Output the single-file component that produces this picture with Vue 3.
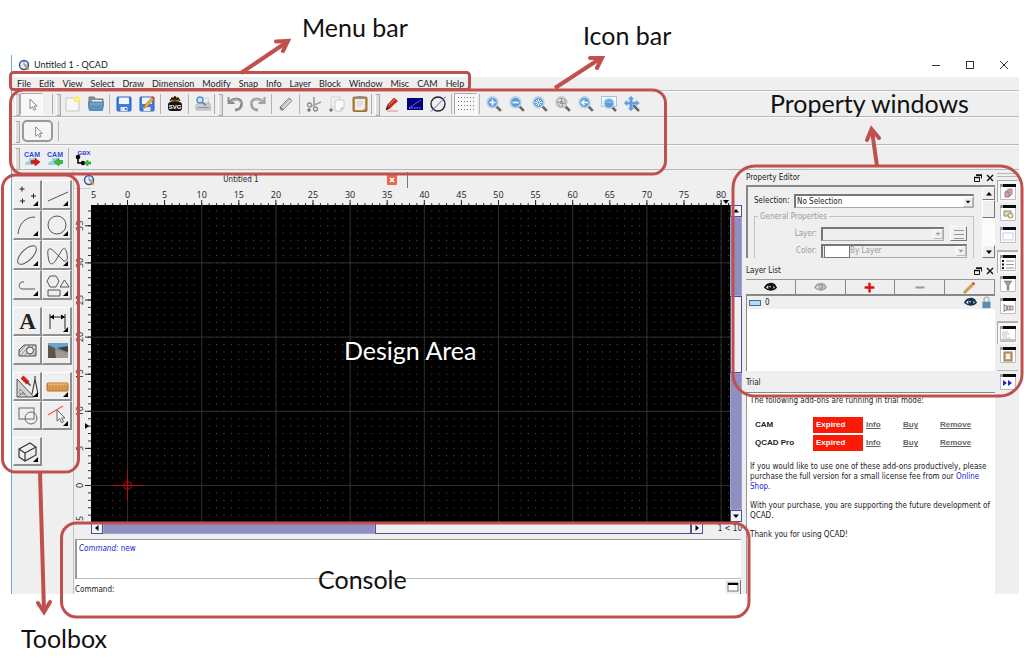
<script setup>
import { ref } from 'vue'

const menus = ['File', 'Edit', 'View', 'Select', 'Draw', 'Dimension', 'Modify', 'Snap', 'Info', 'Layer', 'Block', 'Window', 'Misc', 'CAM', 'Help']

const cursor = '<path d="M6 3v10l2.400-2.200 1.700 3.400 1.600-.8-1.600-3.300h3z" fill="#fff" stroke="#858585" stroke-width="1"/>'
const lens = (inner, tone = '#5b9be0', rim = '#b9cfe4') =>
  `<path d="M10 10l4.800 4.800" stroke="#686868" stroke-width="2.600"/><circle cx="6.500" cy="6.300" r="5.300" fill="${tone}" stroke="${rim}" stroke-width="1.800"/>${inner}`
const cam = (arrow) =>
  `<path d="M1 15q0-4 4-4V8h6v3q3 0 3 4z" fill="#9bd3e2"/><text x="8" y="7" text-anchor="middle" font-size="7" font-family="Liberation Sans, sans-serif" font-weight="700" fill="#2a4ae0">CAM</text>${arrow}`

const icons = {
  select: cursor,
  new: '<path d="M1 2h10l3 3v10H1z" fill="#f7f7f7" stroke="#c6c6c6"/><circle cx="12" cy="3.500" r="3" fill="#f3ec3c" stroke="#f8f4a0"/><circle cx="12" cy="3.500" r="1" fill="#fff"/>',
  open: '<path d="M1 13V1h5l1 2h8v3" fill="#8b8f92" stroke="#777"/><path d="M4 4h10v4H4z" fill="#e8eef2"/><path d="M0 6h16l-1.500 8.500h-13z" fill="#5d93bd" stroke="#4b7da6" stroke-width=".8"/><path d="M2 8h12" stroke="#8ab5d6"/>',
  save: '<rect x="1" y="1" width="14" height="14" rx="1" fill="#3f7be0" stroke="#2d60be"/><path d="M3 1.500h10V8H3z" fill="#f2f5fb"/><path d="M4.500 11h7v4h-7z" fill="#dfe6f2"/><path d="M9 12h1.500v2H9z" fill="#3a62a8"/>',
  saveas: '<rect x="1" y="1" width="14" height="14" rx="1" fill="#3f7be0" stroke="#2d60be"/><path d="M3 1.500h10V8H3z" fill="#f2f5fb"/><path d="M4.500 11h7v4h-7z" fill="#dfe6f2"/><path d="M5 12l1-3 7.500-8.500 2 2L8 11z" fill="#f2a93a" stroke="#b86f16" stroke-width=".7"/><path d="M13 1l2 2" stroke="#d94b4b" stroke-width="2"/>',
  svg: '<circle cx="8" cy="4.500" r="4" fill="#f0a42c"/><path d="M3 5l2-3 1 2 2-3.500L10 4l1-2 2 3M4 6h8M8 2v5" fill="none" stroke="#111" stroke-width="1.200"/><rect x="1" y="6" width="14" height="9" rx="3" fill="#17140d"/><text x="8" y="13" text-anchor="middle" font-family="Liberation Sans, sans-serif" font-size="6" font-weight="700" fill="#fff">SVG</text>',
  preview: '<path d="M8 2h5l1 6H7z" fill="#e9eef4" stroke="#b9bec5" stroke-width=".7"/><path d="M1 9l2-2h11l2 2v5H1z" fill="#c9ccd0" stroke="#a5a8ac" stroke-width=".7"/><path d="M3 11.500h11" stroke="#8e9195"/><circle cx="5" cy="4" r="3" fill="#cfe1f5" stroke="#5e8fc7" stroke-width="1.400"/><path d="M7 6l4 3.500" stroke="#5e7fa7" stroke-width="1.500"/>',
  undo: '<path d="M1.500 1v6h6" fill="none" stroke="#8b8b8b" stroke-width="2"/><path d="M2.500 6.500C6 1.500 14.500 2 14.500 8c0 4-3 6-6.500 6" fill="none" stroke="#8b8b8b" stroke-width="2.800"/><path d="M3.500 6C7 2 13.500 3 14 8" fill="none" stroke="#c4c4c4" stroke-width=".8"/>',
  redo: '<path d="M14.500 1v6h-6" fill="none" stroke="#a0a0a0" stroke-width="2"/><path d="M13.500 6.500C10 1.500 1.500 2 1.500 8c0 4 3 6 6.500 6" fill="none" stroke="#a0a0a0" stroke-width="2.800"/><path d="M12.500 6C9 2 2.500 3 2 8" fill="none" stroke="#cfcfcf" stroke-width=".8"/>',
  eraser: '<path d="M2 11L11 2l3 2.500L5 14H3z" fill="#d9d9d9" stroke="#888" stroke-width="1"/><path d="M4 11l8-8" stroke="#a8a8a8"/><path d="M2 11l3 3" stroke="#777" stroke-width="1.400"/>',
  cut: '<path d="M8 1v9M15 6L6 10" stroke="#a5a5a5" stroke-width="1.800"/><circle cx="3.500" cy="9" r="2" fill="none" stroke="#8b8b8b" stroke-width="1.300"/><circle cx="9.500" cy="13" r="2" fill="none" stroke="#8b8b8b" stroke-width="1.300"/><path d="M3 12v4M1 14h4" stroke="#555"/>',
  copy: '<path d="M2 1h9v10H2z" fill="#f2f2f2" stroke="#d2d2d2"/><path d="M6 4h9v8l-3 3H6z" fill="#fafafa" stroke="#cccccc"/><path d="M15 12h-3v3" fill="none" stroke="#bbb"/><path d="M2 12v4M0 14h4" stroke="#555"/>',
  paste: '<rect x="1" y="1" width="14" height="14.500" rx="1" fill="#b98a45" stroke="#9a7136"/><path d="M3 3h10v9l-2 2H3z" fill="#eeeeec"/><rect x="5" y="0" width="6" height="3" rx="1" fill="#8b8f90"/><path d="M5 6h6M5 8h6M5 10h4" stroke="#c6c6c6" stroke-width=".8"/>',
  pencil: '<path d="M2 14l1.500-5L10 2l3.500 3L6 12z" fill="#d3261d" stroke="#8c1510" stroke-width=".6"/><path d="M2 14l1-3.500L5.500 12.500z" fill="#3a2c20"/><path d="M5 9l6-6" stroke="#f2857c"/><path d="M3 15h11" stroke="#e88" stroke-width="1"/>',
  lineweight: '<path d="M0 2h16v12H0z" fill="#00007c"/><path d="M2 12L14 4M2 12h12" stroke="#b9b9ff" stroke-width=".9" stroke-dasharray="1.500 1"/>',
  diameter: '<circle cx="8" cy="8" r="7" fill="none" stroke="#1f1f1f" stroke-width="1.300"/><path d="M1 15.500L16 .5" stroke="#5c5cf2" stroke-width="1"/>',
  grid: '<g fill="#777">' + [1, 5, 9, 13].map(y => [0, 3, 6, 9, 12, 15].map(x => `<rect x="${x}" y="${y}" width="1" height="1"/>`).join('')).join('') + '</g>',
  zoomIn: lens('<path d="M6.500 3.500v6M3.500 6.500h6" stroke="#fff" stroke-width="1.600"/>'),
  zoomOut: lens('<path d="M3.500 6.500h6" stroke="#fff" stroke-width="1.600"/>'),
  zoomAuto: lens('<path d="M4 4l5 5M9 4l-5 5M6.500 3v7M3 6.500h7" stroke="#fff" stroke-width="1"/><circle cx="6.500" cy="6.500" r="1.200" fill="#5b9be0"/>'),
  zoomSel: lens('<path d="M4 4h5v5H4z" fill="none" stroke="#eee" stroke-width="1.300" stroke-dasharray="2 1"/>', '#9a9a9a', '#cacaca'),
  zoomPrev: lens('<path d="M10 6.500H4M6.500 4L3.800 6.500 6.500 9" stroke="#fff" fill="none" stroke-width="1.500"/>'),
  zoomWin: '<path d="M.5.500h15v10H.5z" fill="#f5f8fc" stroke="#9fc2ea"/><path d="M11 11l4 4" stroke="#686868" stroke-width="2.500"/><circle cx="8" cy="7.500" r="4.800" fill="#5b9be0" stroke="#b9cfe4" stroke-width="1.500"/><path d="M5 6h6" stroke="#a9ccf2"/>',
  pan: '<path d="M9 9l6 6" stroke="#686868" stroke-width="2.500"/><path d="M7 0l3 3H8.500v3H12V4l3.500 3L12 10V8.500H8.500V12H10l-3 3-3-3h1.500V8.500H3V10L0 7l3-3v2h2.500V3H4z" fill="#5f9fe2" stroke="#9bbfe4" stroke-width=".6"/>',
  camOut: cam('<path d="M7 10.500h4V8l5 4-5 4v-2.500H7z" fill="#e01414" stroke="#9a1010" stroke-width=".5"/>'),
  camIn: cam('<path d="M16 10.500h-4V8l-5 4 5 4v-2.500h4z" fill="#35c33a" stroke="#197a1d" stroke-width=".5"/>'),
  gbx: '<text x="9" y="5" text-anchor="middle" font-size="6" font-family="Liberation Sans, sans-serif" font-weight="700" fill="#3434d8">GBX</text><circle cx="3" cy="7" r="2.300" fill="#050505"/><path d="M3 7v6h6" fill="none" stroke="#050505" stroke-width="1.600"/><circle cx="8" cy="13" r="2.200" fill="#050505"/><path d="M16 12h-3v-2l-4 3 4 3v-2h3z" fill="#35c33a" stroke="#197a1d" stroke-width=".5"/>'
}

const mainBar = [
  { t: 'handle' }, { t: 'on', i: 'select', l: 'Select' }, { t: 'wide' },
  { i: 'new', l: 'New' }, { i: 'open', l: 'Open' }, { t: 'sep' },
  { i: 'save', l: 'Save' }, { i: 'saveas', l: 'Save as' }, { t: 'sep' },
  { i: 'svg', l: 'Export SVG' }, { t: 'sep' }, { i: 'preview', l: 'Print preview' }, { t: 'group' },
  { i: 'undo', l: 'Undo' }, { i: 'redo', l: 'Redo' }, { t: 'sep' }, { i: 'eraser', l: 'Delete' }, { t: 'sep' },
  { i: 'cut', l: 'Cut' }, { i: 'copy', l: 'Copy' }, { i: 'paste', l: 'Paste' }, { t: 'group' },
  { i: 'pencil', l: 'Pen' }, { i: 'lineweight', l: 'Screen based linetypes' }, { i: 'diameter', l: 'Draft mode' }, { t: 'sep' },
  { t: 'on', i: 'grid', l: 'Grid' }, { t: 'sep' },
  { i: 'zoomIn', l: 'Zoom in' }, { i: 'zoomOut', l: 'Zoom out' }, { i: 'zoomAuto', l: 'Auto zoom' }, { i: 'zoomSel', l: 'Zoom to selection' },
  { i: 'zoomPrev', l: 'Previous view' }, { i: 'zoomWin', l: 'Window zoom' }, { i: 'pan', l: 'Pan' }
]

const thin = (d) => `<path d="${d}" fill="none" stroke="#555" stroke-width="1"/>`
const more = '<path d="M25 20v5h-5z" fill="#000"/>'
const toolGroups = [
  [
    ['Point', '<path d="M6.500 8h5M9 5.500v5M18 15h5M20.500 12.500v5M7 20h5M9.500 17.500v5" stroke="#222" fill="none"/>' + more],
    ['Line', thin('M5 20L25 11') + more],
    ['Arc', thin('M5 23C6 13 12 6 22 6') + more],
    ['Circle', '<circle cx="14" cy="14" r="9" fill="none" stroke="#555"/>' + more],
    ['Ellipse', '<ellipse cx="14" cy="14" rx="12" ry="5.500" transform="rotate(-45 14 14)" fill="none" stroke="#555"/>' + more],
    ['Spline', thin('M6 20C3 7 6 6 10 9.500L21 20C24 21 25 17 24 13S22 5 19 9L13 19C10 24 7 24 6 20') + more],
    ['Polyline', thin('M11 11C5 10 5 18 9 18H22') + more],
    ['Shape', thin('M7 5h6l3 5-3 6H7L4 10zM17 16l4.500-7 4.500 7zM5 19h12v6H5z') + more]
  ],
  [
    ['Text', '<text x="14.500" y="22" text-anchor="middle" font-family="Liberation Serif, serif" font-weight="700" font-size="23" fill="#222">A</text>'],
    ['Dimension', '<path d="M7 22V7M22 22V7M7 10h15" fill="none" stroke="#222"/><path d="M7 10l4-2.500v5zM22 10l-4-2.500v5z" fill="#000"/>' + more],
    ['Hatch', '<path d="M6 20V14l5-5h12v11z" fill="#ddd" stroke="#444"/><path d="M6 17l6-7M7 20L17 9M11 20l10-11M16 20l7-8M20 20l3-4" stroke="#777" stroke-width=".8"/><circle cx="17" cy="14.500" r="3.500" fill="#efefef" stroke="#444"/>'],
    ['Image', '<rect x="5" y="7" width="20" height="15" fill="#7b8a93"/><path d="M5 7h20v5l-8 1-12-1z" fill="#6fa3cc"/><path d="M5 9l7 3 3 10H5z" fill="#5b5448"/><path d="M14 12l11-2v6z" fill="#3b4038"/><path d="M12 14l13 3v5H13z" fill="#a29b8d"/>']
  ],
  [
    ['Modify', '<path d="M4 7v18h17z" fill="#d2d2d2" stroke="#555"/><path d="M7 17v5h5z" fill="#efefef" stroke="#777" stroke-width=".8"/><path d="M5 25l5-5 4 5" stroke="#777" fill="none"/><path d="M9 5l6 6" stroke="#d32217" stroke-width="4"/><path d="M14 10l3.500 3.500" stroke="#444" stroke-width="1.600"/><path d="M22 4v4M22 7l-3 15M22 7l3 15" stroke="#333" fill="none" stroke-width="1.100"/>' + more],
    ['Measure', '<rect x="4" y="11" width="21" height="8" rx="1" fill="#dd9348" stroke="#b26f2d"/><path d="M5 12.500h19" stroke="#f4c083" stroke-width="2"/><path d="M7 12v2M10 12v2M13 12v2M16 12v2M19 12v2M22 12v2" stroke="#b57a40" stroke-width=".8"/>' + more],
    ['Boolean', '<rect x="6" y="7" width="15" height="11" fill="none" stroke="#666"/><circle cx="18" cy="17" r="6" fill="none" stroke="#666"/>'],
    ['Snap', '<path d="M5 14L20 5" stroke="#f25757" stroke-width="1.300"/><path d="M14 9v11l2.600-2.300 2 4 2-1-2-3.700h3.400z" fill="#f4f4f4" stroke="#666"/>' + more]
  ],
  [['Block', '<path d="M6 12l11-6 6 4v8l-11 6-6-4zM6 12l6 4v8M12 16l11-6" fill="none" stroke="#333" stroke-width="1.200"/>' + more]]
]

// Drawing scale: five units per step
const step = 37.1
const originX = 36.5
const originY = 280.5
const topMarks = Array.from({ length: 17 }, (_, k) => ({ v: k * 5, p: originX + k * step }))
const leftMarks = Array.from({ length: 8 }, (_, k) => ({ v: k * 5, p: originY - k * step }))
const minorTop = Array.from({ length: 86 }, (_, k) => originX + (k - 4) * step / 5)
const minorLeft = Array.from({ length: 42 }, (_, k) => originY - (k - 4) * step / 5)

const frame = '<path d="M0 0h16v16H0z" fill="#fff"/><path d="M.5 3v12.500h15V3" fill="none" stroke="#bdbdbd"/><path d="M0 0h16v3H0z" fill="#0b0b0b"/><path d="M0 0h3v3H0z" fill="#999"/>'
const dockIcons = [
  { n: 'Property Editor', on: true, d: '<path d="M5 8l4-3h3v5l-3 3H5z" fill="#e59a9a" stroke="#8a8a8a"/><path d="M5 8h4v5" fill="none" stroke="#8a8a8a"/>' },
  { n: 'Block List', d: '<path d="M4 6h7v5H4z" fill="#e8dc9a" stroke="#888"/><circle cx="10.500" cy="10.500" r="2.500" fill="#f2e8b4" stroke="#888"/>' },
  { n: 'View List', d: '<rect x="3" y="6" width="10" height="7" fill="#fafcff" stroke="#bcd2ec"/>', end: true },
  { n: 'Layer List', on: true, d: '<path d="M2 6h2M2 9.500h2M2 13h2" stroke="#111" stroke-width="2"/><path d="M6 6h8M6 9.500h8M6 13h8" stroke="#999"/>' },
  { n: 'Selection Filter', d: '<path d="M4 5h8L9 9v5H7V9z" fill="#999" stroke="#777" stroke-width=".6"/>' },
  { n: 'Part Library', d: '<path d="M4 6v8M4 7l3 1v4l-3 1M7 8h6v4H7z" fill="#ddd" stroke="#777" stroke-width=".8"/><path d="M10 8v4" stroke="#b55"/>', end: true },
  { n: 'Command Line', on: true, d: '<path d="M2 6h6M2 8h8M2 10h5M2 12h9" stroke="#c5c5c5"/><path d="M1 14h14" stroke="#888"/>' },
  { n: 'Clipboard', d: '<rect x="4" y="5" width="8" height="9" fill="#c9a676" stroke="#9a7a4c"/><path d="M6 7h4v5H6z" fill="#f2f2f2"/>', end: true },
  { n: 'More', d: '<path d="M3 6l4 3-4 3zM8 6l4 3-4 3z" fill="#2525cc"/>' }
]

const eye = (c) => `<path d="M1 8C4 3 12 3 15 8 12 12 5 12 1 8z" fill="none" stroke="${c}" stroke-width="1.800"/><circle cx="8.500" cy="8" r="3.300" fill="${c}"/><path d="M2 6C5 2 12 2 14 6" fill="none" stroke="${c}" stroke-width="1.400"/><circle cx="7.500" cy="7" r="1" fill="#efefef"/>`
const layerButtons = [
  ['Show all', eye('#111')],
  ['Hide all', eye('#a5a5a5')],
  ['Add layer', '<path d="M8 2v12M2 8h12" stroke="#d81313" stroke-width="3"/>'],
  ['Remove layer', '<path d="M3 8h11" stroke="#9c9c9c" stroke-width="2.600"/>'],
  ['Edit layer', '<path d="M1 15l1-3L12 2l2 2-10 10z" fill="#e3a33c" stroke="#936218" stroke-width=".6"/><path d="M12 2l2 2" stroke="#cf3c30" stroke-width="2.400"/>']
]
const addons = ['CAM', 'QCAD Pro']
const command = ref('')
</script>

<template>
  <div class="page">
    <div class="window">
      <header class="titlebar">
        <svg class="logo" viewBox="0 0 12 12"><circle cx="6" cy="6" r="4.500" fill="#e8edf5" stroke="#34518c" stroke-width="1.400" /><path d="M6 2v4h4" stroke="#7d93bf" fill="none" /><path d="M6 6l4 5 1-2z" fill="#e7a52e" stroke="#a86d14" stroke-width=".5" /></svg>
        <span class="title">Untitled 1 - QCAD</span>
        <button aria-label="Minimize"><svg viewBox="0 0 10 10"><path d="M1 5.500h8" stroke="#333" /></svg></button>
        <button aria-label="Maximize"><svg viewBox="0 0 10 10"><rect x="1.500" y="1.500" width="7" height="7" fill="none" stroke="#333" /></svg></button>
        <button aria-label="Close"><svg viewBox="0 0 10 10"><path d="M1 1l8 8M9 1l-8 8" stroke="#333" /></svg></button>
      </header>

      <nav class="menubar">
        <button v-for="m in menus" :key="m">{{ m }}</button>
      </nav>

      <div class="toolbar main-bar">
        <template v-for="(b, k) in mainBar" :key="k">
          <span v-if="!b.i" :class="b.t"></span>
          <button v-else :class="['slot', { on: b.t === 'on' }]" :aria-label="b.l"><svg viewBox="0 0 16 16" v-html="icons[b.i]"></svg></button>
        </template>
      </div>
      <div class="toolbar option-bar">
        <span class="handle"></span>
        <button class="option" aria-label="Reset"><svg viewBox="0 0 16 16" v-html="icons.select"></svg></button>
        <span class="sep"></span>
      </div>
      <div class="toolbar cam-bar">
        <span class="handle"></span>
        <button class="slot" aria-label="CAM export"><svg viewBox="0 0 16 16" v-html="icons.camOut"></svg></button>
        <button class="slot" aria-label="CAM import"><svg viewBox="0 0 16 16" v-html="icons.camIn"></svg></button>
        <span class="sep"></span>
        <button class="slot" aria-label="GBX import"><svg viewBox="0 0 16 16" v-html="icons.gbx"></svg></button>
      </div>

      <main class="work">
        <aside class="toolbox">
          <div v-for="(g, k) in toolGroups" :key="k" class="tools">
            <button v-for="t in g" :key="t[0]" :aria-label="t[0]"><svg viewBox="0 0 28 28" v-html="t[1]"></svg></button>
          </div>
        </aside>

        <section class="center">
          <div class="tabs">
            <div class="tab">
              <svg class="logo" viewBox="0 0 12 12"><circle cx="6" cy="6" r="4.500" fill="#e8edf5" stroke="#34518c" stroke-width="1.400" /><path d="M6 2v4h4" stroke="#7d93bf" fill="none" /><path d="M6 6l4 5 1-2z" fill="#e7a52e" stroke="#a86d14" stroke-width=".5" /></svg>
              <span>Untitled 1</span>
              <button class="tab-close" aria-label="Close tab"><svg viewBox="0 0 10 10"><path d="M3 3l4 4M7 3L3 7" stroke="#fff" stroke-width="1.600" /></svg></button>
            </div>
          </div>
          <div class="drawing">
            <span class="corner"></span>
            <svg class="ruler-top">
              <path v-for="(p, k) in minorTop" :key="'m' + k" :d="`M${p} 15v3`" stroke="#333" />
              <text x="0" y="10">5</text>
              <g v-for="m in topMarks" :key="m.v">
                <path :d="`M${m.p} 12v6`" stroke="#222" />
                <text :x="m.p" y="10" text-anchor="middle">{{ m.v }}</text>
              </g>
              <path d="M632 12h6l-3 4z" fill="#000" />
            </svg>
            <span></span>
            <svg class="ruler-left">
              <path v-for="(p, k) in minorLeft" :key="'m' + k" :d="`M14 ${p}h3`" stroke="#333" />
              <text transform="translate(9 316) rotate(-90)">5</text>
              <g v-for="m in leftMarks" :key="m.v">
                <path :d="`M11 ${m.p}h6`" stroke="#222" />
                <text text-anchor="middle" :transform="`translate(9 ${m.p}) rotate(-90)`">{{ m.v }}</text>
              </g>
              <path d="M11 218v6l4-3z" fill="#000" />
            </svg>
            <div class="canvas">
              <svg>
                <defs>
                  <pattern id="dots" :x="originX - 0.5" :y="originY - 0.5" :width="step / 5" :height="step / 5" patternUnits="userSpaceOnUse"><rect width="1" height="1" fill="#555" /></pattern>
                  <pattern id="lines" :x="originX - 0.5" :y="originY - 0.5" :width="step * 2" :height="step * 2" patternUnits="userSpaceOnUse"><path d="M.5 0v80M0 .5h80" stroke="#303030" /></pattern>
                </defs>
                <rect width="100%" height="100%" fill="#000" />
                <rect width="100%" height="100%" fill="url(#dots)" />
                <rect width="100%" height="100%" fill="url(#lines)" />
                <g fill="#b80e0e">
                  <rect :x="originX - 15" :y="originY - 0.5" width="30" height="1" />
                  <rect :x="originX - 0.5" :y="originY - 15" width="1" height="30" />
                </g>
                <circle :cx="originX" :cy="originY" r="4" fill="none" stroke="#b80e0e" />
              </svg>
            </div>
            <div class="scroll vertical">
              <button aria-label="Scroll up"><svg viewBox="0 0 10 10"><path d="M2 6.500h6L5 3z" /></svg></button>
              <span class="before"></span><span class="thumb"></span><span class="after"></span>
              <button aria-label="Scroll down"><svg viewBox="0 0 10 10"><path d="M2 3.500h6L5 7z" /></svg></button>
            </div>
            <span></span>
            <div class="scroll-row">
              <div class="scroll horizontal">
                <button aria-label="Scroll left"><svg viewBox="0 0 10 10"><path d="M6.500 2v6L3 5z" /></svg></button>
                <span class="before"></span><span class="thumb"></span>
                <button aria-label="Scroll right"><svg viewBox="0 0 10 10"><path d="M3.500 2v6L7 5z" /></svg></button>
              </div>
              <span class="scale">1 &lt; 10</span>
            </div>
          </div>
          <div class="console">
            <div class="history"><i>Command:</i> new</div>
            <div class="prompt">
              <label for="cmd">Command:</label>
              <input id="cmd" v-model="command" type="text">
              <button aria-label="Toggle history"><svg viewBox="0 0 12 10"><rect x="1" y="1" width="10" height="8" fill="#fff" stroke="#777" /><path d="M1 2h10" stroke="#000" stroke-width="2" /></svg></button>
            </div>
          </div>
        </section>

        <aside class="dock">
          <div class="dock-head">
            <h2>Property Editor</h2>
            <button aria-label="Float"><svg viewBox="0 0 8 8"><path d="M2.500 1.500h5v3M.5 3.500h5v4h-5z" fill="none" stroke="#111" /><path d="M2 1h6M0 3.500h6" stroke="#111" stroke-width="1.500" /></svg></button>
            <button aria-label="Close panel"><svg viewBox="0 0 8 8"><path d="M1 1l6 6M7 1L1 7" stroke="#111" stroke-width="1.400" /></svg></button>
          </div>
          <div class="editor">
            <div class="editor-body">
              <div class="field top">
                <label for="sel">Selection:</label>
                <span class="combo"><select id="sel"><option>No Selection</option></select><svg viewBox="0 0 10 10"><path d="M2 3.500h6L5 7z" /></svg></span>
              </div>
              <fieldset>
                <legend>General Properties</legend>
                <div class="field">
                  <label for="lay">Layer:</label>
                  <span class="combo dim"><select id="lay" disabled><option></option></select><svg viewBox="0 0 10 10"><path d="M2 3.500h6L5 7z" /></svg></span>
                  <button class="lines" aria-label="Layer options"><svg viewBox="0 0 12 12"><path d="M1 2.500h10M1 6.500h10M1 10.500h10" stroke="#999" /></svg></button>
                </div>
                <div class="field">
                  <label for="col">Color:</label>
                  <span class="combo dim swatch"><select id="col" disabled><option>By Layer</option></select><svg viewBox="0 0 10 10"><path d="M2 3.500h6L5 7z" /></svg></span>
                </div>
              </fieldset>
            </div>
            <div class="mini-scroll">
              <button aria-label="Up"><svg viewBox="0 0 10 10"><path d="M2 6.500h6L5 3z" /></svg></button>
              <span class="grip"></span>
              <button aria-label="Down"><svg viewBox="0 0 10 10"><path d="M2 3.500h6L5 7z" /></svg></button>
            </div>
          </div>

          <div class="dock-head list-head">
            <h2>Layer List</h2>
            <button aria-label="Float"><svg viewBox="0 0 8 8"><path d="M2.500 1.500h5v3M.5 3.500h5v4h-5z" fill="none" stroke="#111" /><path d="M2 1h6M0 3.500h6" stroke="#111" stroke-width="1.500" /></svg></button>
            <button aria-label="Close panel"><svg viewBox="0 0 8 8"><path d="M1 1l6 6M7 1L1 7" stroke="#111" stroke-width="1.400" /></svg></button>
          </div>
          <div class="layer-buttons">
            <button v-for="b in layerButtons" :key="b[0]" :aria-label="b[0]"><svg viewBox="0 0 16 16" v-html="b[1]"></svg></button>
          </div>
          <ul class="layers">
            <li>
              <span class="chip"></span><span class="name">0</span>
              <svg viewBox="0 0 16 16" v-html="eye('#12324c')"></svg>
              <svg viewBox="0 0 16 16"><path d="M5 8V5q0-3.500 3-3.500T11 5v3" fill="none" stroke="#9fb3c2" stroke-width="1.600" /><rect x="3" y="7" width="10" height="8" fill="#5f8db0" /></svg>
            </li>
          </ul>

          <div class="trial-head"><h2>Trial</h2></div>
          <div class="trial">
            <p>The following add-ons are running in trial mode:</p>
            <table>
              <tbody>
                <tr v-for="a in addons" :key="a">
                  <th scope="row">{{ a }}</th>
                  <td class="expired">Expired</td>
                  <td><a href="#info">Info</a></td>
                  <td><a href="#buy">Buy</a></td>
                  <td><a href="#remove">Remove</a></td>
                </tr>
              </tbody>
            </table>
            <p>If you would like to use one of these add-ons productively, please<br>purchase the full version for a small license fee from our <a class="shop" href="#shop">Online<br>Shop</a>.</p>
            <p>With your purchase, you are supporting the future development of<br>QCAD.</p>
            <p>Thank you for using QCAD!</p>
          </div>
        </aside>

        <aside class="strip">
          <span class="strip-grip"></span>
          <button v-for="d in dockIcons" :key="d.n" :class="{ on: d.on, end: d.end }" :aria-label="d.n"><svg viewBox="0 0 16 16" v-html="frame + d.d"></svg></button>
        </aside>
      </main>
    </div>

    <svg class="notes" viewBox="0 0 1024 661" aria-hidden="true">
      <g fill="none" stroke="#c0504d" stroke-width="3">
        <rect x="10.500" y="72.500" width="459" height="17" rx="3" />
        <rect x="10.500" y="90" width="655" height="84" rx="13" />
        <rect x="2.500" y="175" width="76" height="297" rx="13" />
        <rect x="733" y="166" width="289" height="230" rx="22" />
        <rect x="61.500" y="523" width="687.500" height="94" rx="15" />
        <path d="M241 73L287 42M555 88L601 58M877 166L872 131M40 472L44 611" stroke-width="4" />
        <path d="M276 41.500L288 41L283 51M590 58L602 58L597 68M867 140L871.500 129L879 138M38 603L44 612L50 602" stroke-width="4" stroke-linecap="round" />
      </g>
    </svg>
    <span class="note menu-note">Menu bar</span>
    <span class="note icon-note">Icon bar</span>
    <span class="note property-note">Property windows</span>
    <span class="note design-note">Design Area</span>
    <span class="note console-note">Console</span>
    <span class="note toolbox-note">Toolbox</span>
  </div>
</template>

<style>
body { margin: 0; background: #fff; }
</style>

<style scoped>
.page { position: relative; min-height: 661px; box-sizing: border-box; padding: 55px 5px 0 11px; overflow: hidden; font: 8px/10px "DejaVu Sans Condensed", "Open Sans", sans-serif; color: #222; }
.page * { box-sizing: border-box; }
button { font: inherit; color: inherit; padding: 0; margin: 0; border: 0; background: none; display: flex; align-items: center; justify-content: center; flex: none; }
svg { display: block; flex: none; }
h2 { font: inherit; margin: 0; flex: 1; }
.window { border-left: 1px solid #6aa5d3; background: #efefef; }
.titlebar { display: flex; align-items: center; gap: 4px; height: 22px; padding: 0 0 2px 6px; background: #fff; font: 9px/12px Lato, "Open Sans", sans-serif; }
.titlebar .title { flex: 1; }
.titlebar button { width: 30px; height: 18px; }
.titlebar button svg { width: 10px; height: 10px; }
.logo { width: 12px; height: 12px; }
.menubar { display: flex; height: 14px; padding-left: 5px; gap: 8px; border-bottom: 1px solid #bdbdbd; font: 9px/12px Lato, "Open Sans", sans-serif; }
.toolbar { display: flex; align-items: center; border-bottom: 1px solid #b8b8b8; border-top: 1px solid #fafafa; }
.main-bar { height: 26px; }
.option-bar { height: 28px; }
.cam-bar { height: 25px; }
.slot { width: 23px; height: 22px; }
.slot svg { width: 16px; height: 16px; }
.slot.on { border: 1px solid #a9a9a9; border-right-color: #fff; border-bottom-color: #fff; background: #f7f7f7; }
.handle, .group, .wide, .sep { height: 20px; flex: none; }
.handle { width: 8px; border-left: 3px solid #efefef; }
.handle::after, .group::after, .wide::after { content: ""; display: block; width: 3px; height: 20px; border: 1px solid #aaa; border-left-color: #fff; background: #ddd; }
.group { width: 9px; border-left: 1px solid #aaa; padding-left: 3px; }
.wide { width: 18px; padding-left: 13px; background: linear-gradient(#aaa, #aaa) 9px 0 / 1px 20px no-repeat; }
.sep { width: 5px; border-left: 2px solid #efefef; }
.sep::after { content: ""; display: block; width: 1px; height: 20px; background: #b5b5b5; }
.option { width: 31px; height: 22px; border: 2px solid #999; border-radius: 5px; background: #f5f5f5; margin: 0 3px 0 2px; }
.option svg { width: 15px; height: 15px; }

.work { display: flex; align-items: stretch; }
.toolbox { width: 62px; flex: none; padding: 10px 0 0 1px; border-right: 1px solid #c5c5c5; }
.tools { display: grid; grid-template-columns: 29px 30px; margin-bottom: 7px; }
.tools button { height: 30px; border: 1px solid #fff; border-right: 2px solid #8f8f8f; border-bottom: 2px solid #8f8f8f; }
.tools:nth-child(n+2) button { height: 29px; }
.tools svg { width: 28px; height: 28px; }

.center { flex: 1; min-width: 0; display: flex; flex-direction: column; }
.tabs { display: flex; height: 18px; padding: 2px 0 0 9px; }
.tab { width: 325px; display: flex; align-items: center; border-right: 1px solid #777; }
.tab span { flex: 1; text-align: center; }
.tab-close { width: 10px; height: 10px; margin-right: 10px; background: #e8694a; border-radius: 1px; }
.tab-close svg { width: 10px; height: 10px; }
.drawing { flex: 1; display: grid; grid-template-columns: 17px 1fr 12px; grid-template-rows: 17px minmax(317px, 1fr) 12px; padding-right: 1px; }
.corner { border-top: 1px solid #ccc; }
.ruler-top { width: 100%; height: 17px; }
.ruler-left { width: 17px; height: 100%; }
.ruler-top text, .ruler-left text { font: 9px "Open Sans", sans-serif; fill: #222; }
.canvas { min-width: 0; background: #000; }
.canvas svg { width: 100%; height: 100%; }
.scroll { display: flex; background: #efefef; }
.scroll button { width: 12px; height: 12px; border: 1px solid #514f93; background: #f2f2f2; }
.scroll button svg { width: 10px; height: 10px; }
.before, .after { background: #908fc2; border: 1px solid #a3a2cf; }
.thumb { background: #f0f0f0; border: 1px solid #514f93; }
.vertical { flex-direction: column; }
.vertical .before { flex: 79; }
.vertical .thumb { flex: 76; }
.vertical .after { flex: 138; }
.scroll-row { grid-column: 2 / 4; display: flex; }
.horizontal { flex: 1; }
.horizontal .before { flex: 272; }
.horizontal .thumb { flex: 316; }
.scale { width: 39px; text-align: right; line-height: 14px; }
.console { height: 60px; margin: 0 2px 0 1px; padding-top: 5px; display: flex; flex-direction: column; }
.history { flex: 1; background: #fff; border: 1px solid #999; border-left-width: 2px; border-right: 0; border-bottom: 1px solid #bbb; padding: 4px 2px; color: #2020d8; }
.prompt { display: flex; height: 15px; background: #fff; align-items: flex-end; }
.prompt label { line-height: 8px; }
.prompt input { flex: 1; min-width: 0; height: 14px; border: 0; padding: 0 3px; font: inherit; outline: 0; background: none; }
.prompt button { width: 16px; height: 14px; border-right: 1px solid #777; background: #efefef; }
.prompt button svg { width: 12px; height: 10px; }

.dock { width: 252px; flex: none; display: flex; flex-direction: column; padding: 1px 0 0 3px; }
.dock-head { height: 14px; display: flex; align-items: center; gap: 4px; padding-right: 1px; }
.dock-head button, .dock-head svg { width: 8px; height: 8px; }
.list-head { height: 17px; padding-bottom: 2px; margin-top: 5px; }
.editor { height: 73px; display: flex; border-top: 2px solid #888; border-left: 2px solid #888; overflow: hidden; }
.editor-body { flex: 1; min-width: 0; padding: 7px 8px 0 6px; }
.field { display: flex; align-items: center; height: 15px; margin-bottom: 2px; }
.field.top { height: 14px; gap: 4px; margin: 0 0 4px; }
.field.top label { width: 36px; white-space: nowrap; }
.combo { flex: 1; min-width: 0; height: 14px; display: flex; align-items: center; background: #fff; border: 1px solid #aaa; border-top: 2px solid #777; border-left: 2px solid #777; }
.combo select { flex: 1; min-width: 0; height: 11px; appearance: none; border: 0; padding: 0 0 0 1px; background: none; font: inherit; color: inherit; opacity: 1; }
.combo svg { width: 10px; height: 10px; border: 1px solid #bbb; border-top-color: #fff; border-left-color: #fff; background: #efefef; }
fieldset { margin: 0; border: 1px solid #c3c3c3; padding: 5px 6px 0 0; color: #9a9a9a; height: 50px; min-width: 0; }
legend { padding: 0 2px; margin-left: 3px; line-height: 9px; height: 9px; }
fieldset label { width: 62px; text-align: right; margin-right: 4px; }
fieldset .combo { background: #efefef; }
.dim svg { fill: #999; }
.swatch select { padding: 0; }
.swatch::before { content: ""; width: 24px; height: 11px; border: 1px solid #777; background: #fff; margin-left: 1px; }
.lines { width: 17px; height: 15px; margin-left: 6px; border: 1px solid #fff; border-right: 1px solid #777; border-bottom: 1px solid #777; }
.lines svg { width: 12px; height: 12px; }
.mini-scroll { width: 13px; display: flex; flex-direction: column; background: #fbfbfb; }
.mini-scroll button { width: 13px; height: 13px; background: #efefef; border: 1px solid #fff; border-right-color: #777; border-bottom-color: #777; }
.mini-scroll svg { width: 10px; height: 10px; }
.mini-scroll .grip { height: 18px; margin-bottom: auto; background: #efefef; border: 1px solid #fff; border-right-color: #777; border-bottom-color: #777; }
.layer-buttons { display: grid; grid-template-columns: repeat(5, 1fr); height: 16px; margin-top: -1px; border-top: 1px solid #999; }
.layer-buttons button { border-right: 1px solid #888; border-bottom: 1px solid #888; }
.layer-buttons svg { width: 13px; height: 13px; }
.layers { margin: 0; padding: 0; list-style: none; height: 76px; background: #fff; border-left: 1px solid #888; border-top: 1px solid #888; }
.layers li { height: 13px; display: flex; align-items: center; background: #efefef; padding: 0 2px; }
.layers svg { width: 13px; height: 13px; margin-left: 3px; }
.chip { width: 12px; height: 6px; background: #b4dcf7; border: 1px solid #44708f; margin-right: 4px; }
.name { flex: 1; }
.trial-head { height: 22px; display: flex; align-items: center; padding-top: 3px; border-bottom: 1px solid #888; }
.trial { flex: 1; background: #fff; border-left: 1px solid #999; padding: 3px 0 0 3px; }
.trial p { margin: 0 0 9px; white-space: nowrap; }
table { border-spacing: 0 2px; margin: 9px 0 9px 5px; font: bold 8px/10px "Liberation Sans", sans-serif; }
th, td { padding: 0 0 0 3px; height: 16px; text-align: left; }
th { width: 58px; padding: 0; }
td { width: 37px; }
.expired { width: 50px; background: #fb1a05; color: #fff; }
td a { color: #666; }
.shop { color: #1d1de0; text-decoration: none; }

.strip { width: 24px; flex: none; padding: 3px 0 0 2px; }
.strip-grip { display: block; height: 4px; border-top: 1px solid #b5b5b5; border-bottom: 1px solid #b5b5b5; margin-bottom: 3px; }
.strip button { width: 21px; height: 22px; }
.strip button svg { width: 16px; height: 16px; }
.strip .on { border-left: 1px solid #aaa; border-top: 1px solid #aaa; background: #f7f7f7; }
.strip .end { height: 27px; padding-bottom: 5px; border-bottom: 1px solid #b5b5b5; }

.notes { position: absolute; left: 0; top: 0; width: 1024px; height: 661px; pointer-events: none; }
.note { position: absolute; font: 25px/32px Lato, "Open Sans", sans-serif; color: #111; white-space: nowrap; }
.menu-note { left: 302px; top: 11px; }
.icon-note { left: 583px; top: 19px; }
.property-note { left: 770px; top: 87px; }
.design-note { left: 344px; top: 334px; color: #fff; }
.console-note { left: 318px; top: 563px; }
.toolbox-note { left: 21px; top: 622px; }
</style>
